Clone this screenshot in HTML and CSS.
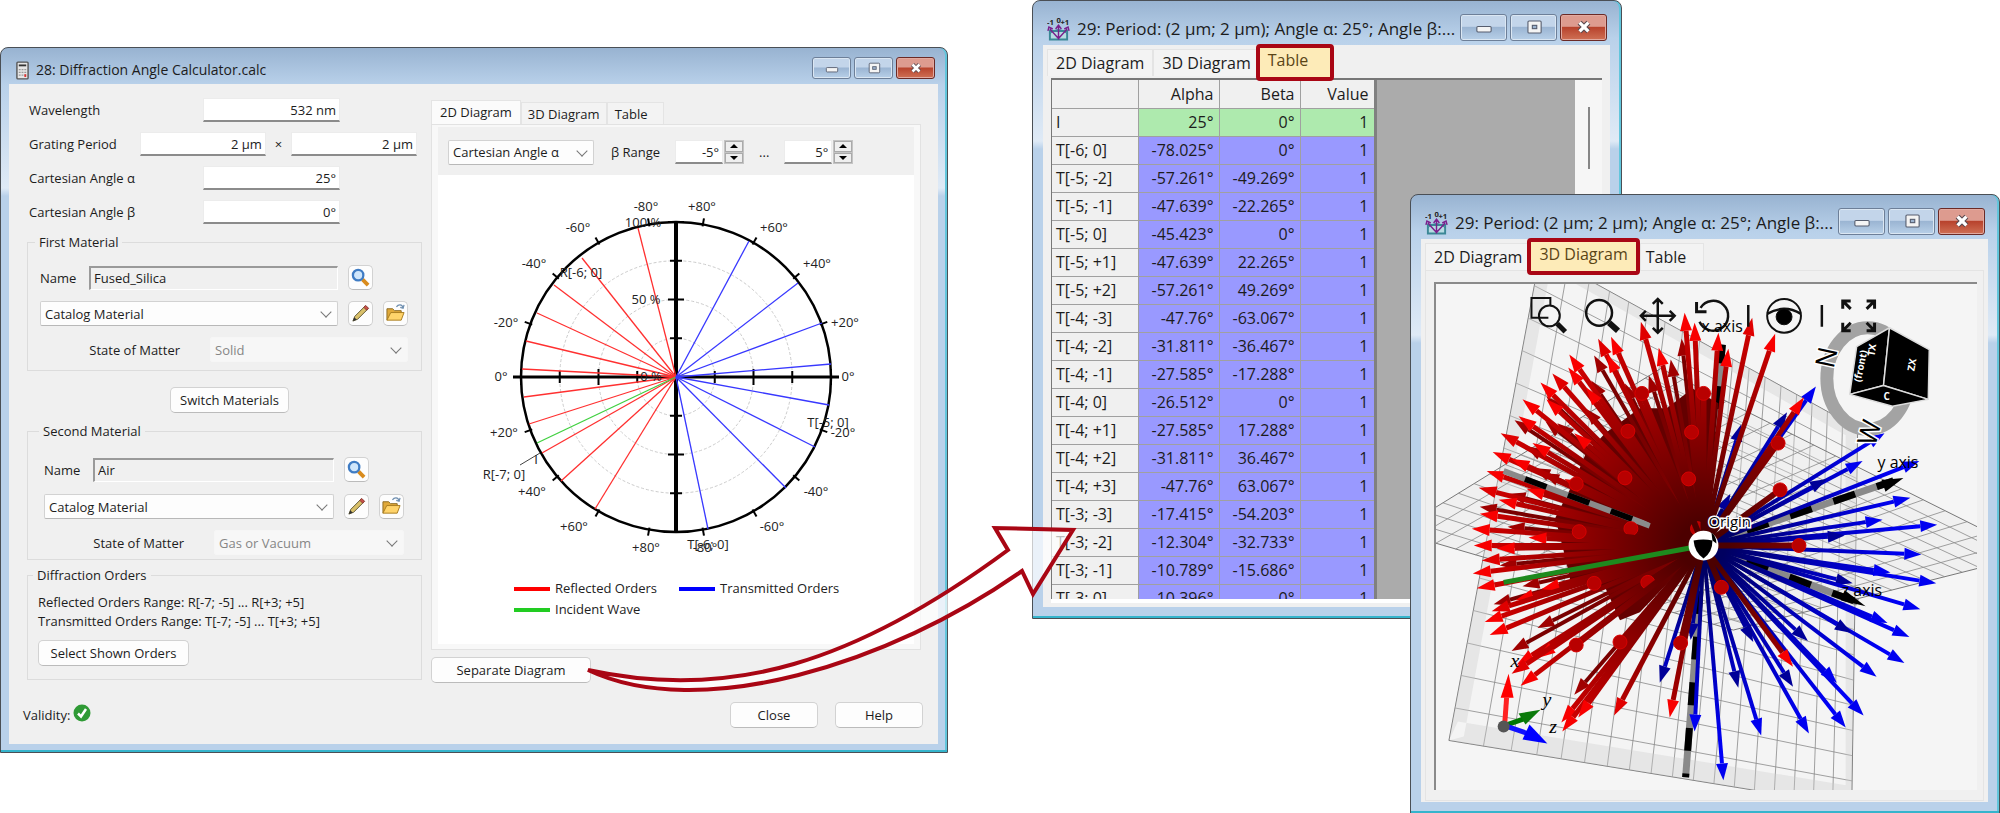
FILE: index.html
```html
<!DOCTYPE html>
<html lang="en">
<head>
    <meta charset="UTF-8">
    <title>Diffraction Angle Calculator</title>
    <link rel="stylesheet" href="styles.css">
</head>
<body>
    <svg class="symbols" width="0" height="0">
        <symbol id="i-lens" viewBox="0 0 20 20">
            <path d="M12 12l6 6" stroke="#d98b1c" stroke-width="4"/>
            <circle cx="7.5" cy="7.5" r="5.5" fill="#cfe6fb" stroke="#3f7cc4" stroke-width="2.4"/>
        </symbol>
        <symbol id="i-pencil" viewBox="0 0 20 20">
            <path d="M2 18l2-5L15 2l3 3L7 16z" fill="#d9c06a" stroke="#5c5433"/>
            <path d="M13.500 3.500L15.500 1.500l3 3-2 2z" fill="#c9504a" stroke="#8a3a34"/>
            <path d="M2 18l1.500-4 2.500 2.500z" fill="#333"/>
        </symbol>
        <symbol id="i-folder" viewBox="0 0 20 20">
            <path d="M1 17V5h6l2 2h7v3" fill="#e0a93a" stroke="#8c6a22"/>
            <path d="M1 17l4-8h14l-3 8z" fill="#ffd46b" stroke="#a87b1f"/>
            <path d="M11 3c2-3 6-3 7 1m1-3l-1 3.500-3-1" fill="none" stroke="#6f8fb0" stroke-width="1.300"/>
        </symbol>
        <symbol id="i-orders" viewBox="0 0 24 24">
            <path d="M3 14h18v9H3z" fill="#b7dbe2" stroke="#3b8796" stroke-width="2"/>
            <path d="M3 17q9-9 18 0" fill="none" stroke="#3b8796"/>
            <path d="M12 23V9M12 22L3 12M12 22l9-10M1 14l1-4 4 2M23 14l-1-4-4 2M9 12l3-4 3 4" fill="none" stroke="#7a1f8c" stroke-width="1.500"/>
            <g font-family="Open Sans, sans-serif" font-size="8" font-weight="bold" fill="#222">
                <text x="0" y="8">-1</text><text x="10" y="6">0</text><text x="14" y="8">+1</text>
            </g>
        </symbol>
        <symbol id="i-min" viewBox="0 0 20 16">
            <rect x="3.500" y="7.500" width="13" height="5" rx="1" fill="#f4f4f4" stroke="#565d6e"/>
        </symbol>
        <symbol id="i-max" viewBox="0 0 20 16">
            <rect x="4.500" y="2.500" width="12" height="11" rx="1" fill="#f4f4f4" stroke="#565d6e"/>
            <rect x="8.500" y="6.500" width="4" height="3" fill="#9db4cf" stroke="#565d6e"/>
        </symbol>
        <symbol id="i-close" viewBox="0 0 20 16">
            <path d="M6 4l8 8M14 4l-8 8" stroke="#5a4a50" stroke-width="5"/>
            <path d="M6 4l8 8M14 4l-8 8" stroke="#fff" stroke-width="3"/>
        </symbol>
    </svg>

    <main class="desktop">
        <section class="window calculator">
            <header class="titlebar">
                <svg class="title-icon" viewBox="0 0 14 20"><rect x="1" y="1" width="12" height="18" rx="1" fill="#e6e6e6" stroke="#555" stroke-width="1.500"/><path d="M3 4.500h8" stroke="#333" stroke-width="2"/><path d="M3 9h8M3 12h8M3 15h8" stroke="#999" stroke-width="1.500" stroke-dasharray="2 1"/><path d="M9 14h2v3H9z" fill="#d33"/></svg>
                <h1>28: Diffraction Angle Calculator.calc</h1>
                <div class="caption-buttons">
                    <button aria-label="Minimize"><svg><use href="#i-min"/></svg></button>
                    <button aria-label="Maximize"><svg><use href="#i-max"/></svg></button>
                    <button class="close" aria-label="Close window"><svg><use href="#i-close"/></svg></button>
                </div>
            </header>
            <div class="client">
                <div class="columns">
                    <form class="settings">
                        <div class="row"><label for="wavelength">Wavelength</label><input id="wavelength" value="532 nm"></div>
                        <div class="row row-period">
                            <label for="periodX">Grating Period</label><input id="periodX" value="2 µm"><span>×</span><input aria-label="Grating Period y" value="2 µm">
                        </div>
                        <div class="row"><label for="alpha">Cartesian Angle α</label><input id="alpha" value="25°"></div>
                        <div class="row"><label for="beta">Cartesian Angle β</label><input id="beta" value="0°"></div>

                        <fieldset class="first">
                            <legend>First Material</legend>
                            <div class="material">
                                <label for="name1">Name</label><input id="name1" class="readonly" value="Fused_Silica" readonly>
                                <button type="button" class="icon-button" aria-label="View"><svg><use href="#i-lens"/></svg></button>
                                <div class="drop catalog"><select aria-label="First material source"><option>Catalog Material</option></select></div>
                                <button type="button" class="icon-button" aria-label="Edit"><svg><use href="#i-pencil"/></svg></button>
                                <button type="button" class="icon-button" aria-label="Open"><svg><use href="#i-folder"/></svg></button>
                            </div>
                            <div class="state">
                                <label for="state1">State of Matter</label>
                                <div class="drop"><select id="state1" disabled><option>Solid</option></select></div>
                            </div>
                        </fieldset>

                        <button type="button" class="switch">Switch Materials</button>

                        <fieldset class="second">
                            <legend>Second Material</legend>
                            <div class="material">
                                <label for="name2">Name</label><input id="name2" class="readonly" value="Air" readonly>
                                <button type="button" class="icon-button" aria-label="View"><svg><use href="#i-lens"/></svg></button>
                                <div class="drop catalog"><select aria-label="Second material source"><option>Catalog Material</option></select></div>
                                <button type="button" class="icon-button" aria-label="Edit"><svg><use href="#i-pencil"/></svg></button>
                                <button type="button" class="icon-button" aria-label="Open"><svg><use href="#i-folder"/></svg></button>
                            </div>
                            <div class="state">
                                <label for="state2">State of Matter</label>
                                <div class="drop"><select id="state2" disabled><option>Gas or Vacuum</option></select></div>
                            </div>
                        </fieldset>

                        <fieldset class="orders">
                            <legend>Diffraction Orders</legend>
                            <p>Reflected Orders Range: R[-7; -5] ... R[+3; +5]</p>
                            <p>Transmitted Orders Range: T[-7; -5] ... T[+3; +5]</p>
                            <button type="button">Select Shown Orders</button>
                        </fieldset>
                    </form>

                    <div class="results">
                        <nav class="tabs">
                            <button class="tab active">2D Diagram</button>
                            <button class="tab">3D Diagram</button>
                            <button class="tab">Table</button>
                        </nav>
                        <div class="panel">
                            <div class="range-bar">
                                <div class="drop"><select aria-label="Angle type"><option>Cartesian Angle α</option></select></div>
                                <label for="betaFrom">β Range</label>
                                <div class="spin"><input id="betaFrom" value="-5°"><div><button aria-label="Up"></button><button class="down" aria-label="Down"></button></div></div>
                                <span class="dots">...</span>
                                <div class="spin"><input aria-label="β Range to" value="5°"><div><button aria-label="Up"></button><button class="down" aria-label="Down"></button></div></div>
                            </div>
                            <svg class="polar" id="polar" viewBox="0 0 476 469"></svg>
                        </div>
                        <button class="separate">Separate Diagram</button>
                    </div>
                </div>
                <footer>
                    <span>Validity:</span>
                    <svg class="check" viewBox="0 0 18 18"><circle cx="9" cy="9" r="8.500" fill="#2f9a35"/><path d="M5 9.500l3 3L13 5" fill="none" stroke="#fff" stroke-width="2.500"/></svg>
                    <button>Close</button>
                    <button>Help</button>
                </footer>
            </div>
        </section>

        <section class="window large table-window">
            <header class="titlebar">
                <svg class="title-icon"><use href="#i-orders"/></svg>
                <h1>29: Period: (2 µm; 2 µm); Angle α: 25°; Angle β:...</h1>
                <div class="caption-buttons">
                    <button aria-label="Minimize"><svg><use href="#i-min"/></svg></button>
                    <button aria-label="Maximize"><svg><use href="#i-max"/></svg></button>
                    <button class="close" aria-label="Close window"><svg><use href="#i-close"/></svg></button>
                </div>
            </header>
            <div class="client">
                <nav class="tabs">
                    <button class="tab">2D Diagram</button>
                    <button class="tab">3D Diagram</button>
                    <button class="tab marked">Table</button>
                </nav>
                <div class="sheet">
                    <div class="sheet-area">
                        <table>
                            <thead><tr><th></th><th>Alpha</th><th>Beta</th><th>Value</th></tr></thead>
                            <tbody id="orders"></tbody>
                        </table>
                    </div>
                    <div class="scrollbar"><i></i></div>
                </div>
            </div>
        </section>

        <section class="window large space-window">
            <header class="titlebar">
                <svg class="title-icon"><use href="#i-orders"/></svg>
                <h1>29: Period: (2 µm; 2 µm); Angle α: 25°; Angle β:...</h1>
                <div class="caption-buttons">
                    <button aria-label="Minimize"><svg><use href="#i-min"/></svg></button>
                    <button aria-label="Maximize"><svg><use href="#i-max"/></svg></button>
                    <button class="close" aria-label="Close window"><svg><use href="#i-close"/></svg></button>
                </div>
            </header>
            <div class="client">
                <nav class="tabs">
                    <button class="tab">2D Diagram</button>
                    <button class="tab marked">3D Diagram</button>
                    <button class="tab">Table</button>
                </nav>
                <div class="scene-panel">
                    <svg class="scene" viewBox="0 0 544 509">
                        <defs>
                            <radialGradient id="redRay" gradientUnits="userSpaceOnUse" cx="269" cy="263" r="235"><stop offset=".1" stop-color="#4c0000"/><stop offset=".5" stop-color="#8c0000"/><stop offset="1" stop-color="#d80000"/></radialGradient>
                            <radialGradient id="blueRay" gradientUnits="userSpaceOnUse" cx="269" cy="263" r="220"><stop offset=".1" stop-color="#000060"/><stop offset=".5" stop-color="#0000b4"/><stop offset="1" stop-color="#0000ff"/></radialGradient>
                        </defs>
                        <g id="planes"></g>
                        <g id="rays"></g>
                        <g class="tools">
                            <path d="M113 34H96V14h19v8" stroke-width="2"/>
                            <circle cx="114" cy="32" r="10.500" stroke-width="2"/><path d="M122 40l8 8" stroke-width="5"/>
                            <circle cx="164" cy="29" r="13" stroke-width="2.500"/><path d="M174 39l9 8" stroke-width="6"/>
                            <path d="M223 15v34M206 32h34M218 20l5-5 5 5M218 44l5 5 5-5M211 27l-5 5 5 5M235 27l5 5-5 5" stroke-width="2.500"/>
                            <path d="M266 24a15 15 0 1 1-1 14" stroke-width="2.500"/><path d="M262 18v10h10" stroke-width="3"/>
                            <path d="M314 21v22M388 21v22" stroke-width="2.500"/>
                            <circle cx="350" cy="32" r="17" stroke-width="2"/><path d="M333 30q17-10 34 0" stroke-width="2.500"/><circle cx="350" cy="33" r="8" fill="#000"/>
                        </g>
                        <ellipse cx="434" cy="95" rx="41" ry="51" fill="none" stroke="#a3a3a3" stroke-width="13"/>
                        <path class="expand" d="M409 25v-8h8M410 18l7 7M441 25v-8h-8M440 18l-7 7M409 39v8h8M410 46l7-7M441 39v8h-8M440 46l-7-7"/>
                        <g stroke="#ddd" stroke-width="1.500" stroke-linejoin="round">
                            <path d="M456 44L423 63L416 111L450 102z"/><path d="M456 44L496 66L495 116L450 102z"/><path d="M416 111L450 102L495 116L459 123z"/>
                        </g>
                        <g class="compass">
                            <text transform="translate(384 68) rotate(102)" dominant-baseline="middle" text-anchor="middle" x="4" y="-7">N</text>
                            <text transform="translate(438 150) rotate(-75)" dominant-baseline="middle" text-anchor="middle">W</text>
                        </g>
                        <g class="cube-text">
                            <text transform="translate(427 99) rotate(-78)">(front)</text>
                            <text transform="translate(441 73) rotate(-82)">TX</text>
                            <text transform="translate(481 88) rotate(-80)">ZX</text>
                            <text x="450" y="117">C</text>
                        </g>
                        <g class="scene-labels">
                            <text x="267" y="48">x axis</text><text x="444" y="185">y axis</text><text x="408" y="314">z axis</text>
                            <text class="origin" x="274" y="244">Origin</text>
                        </g>
                        <circle cx="269" cy="263" r="15" fill="#fff"/>
                        <path d="M259 258q10-2 19 0q0 12-9 18q-9-6-10-18z"/><path d="M277 250q5 4 5 11l-4-3z"/>
                        <g class="triad">
                            <path d="M69 444l2-28" stroke="#f22"/><path d="M65 416l8-24 5 24z" fill="red"/>
                            <path d="M69 444l20-7" stroke="#070"/><path d="M83 432l22-4-15 15z" fill="#0a7a0a"/>
                            <path d="M69 444l23 8" stroke="#11f"/><path d="M94 443l18 19-25-4z" fill="#00f"/>
                            <circle cx="68" cy="445" r="6" fill="#555"/>
                            <text x="75" y="385">x</text><text x="107" y="424">y</text><text x="114" y="451">z</text>
                        </g>
                    </svg>
                </div>
            </div>
        </section>

        <svg class="callout" viewBox="0 0 500 176">
            <path d="M8 151C150 182 275 144 428 31L415 9L493 11L453 75L442 52C310 145 120 204 8 151z"/>
        </svg>
    </main>
    <script src="script.js"></script>
</body>
</html>
```
FILE: styles.css
```css
* {
    box-sizing: border-box;
}

body {
    margin: 0;
    background: #fff;
    color: #1c1c1c;
    font-family: "Open Sans", "Noto Sans", sans-serif;
    font-size: 13px;
    line-height: 18px;
}

button, input, select {
    font: inherit;
    color: inherit;
}

.symbols {
    position: absolute;
}

.desktop {
    position: relative;
    min-height: 100vh;
    overflow: hidden;
}

/* windows */
.window {
    position: absolute;
    padding: 0 9px 8px 8px;
    border: 1px solid #4a4f55;
    border-radius: 8px 8px 0 0;
    background: linear-gradient(#98b3d1, #b9d1ea 37px, #dfeaf6 140px, #b9d1ea 148px);
    box-shadow: inset 0 -2px 0 #35b4cc, inset -2px 0 0 #62c6dc;
}

.calculator {
    left: 0;
    top: 47px;
    width: 47.4%;
}

.table-window {
    left: 51.6%;
    top: 0;
    width: 29.5%;
}

.space-window {
    left: 70.5%;
    top: 194px;
    width: 29.5%;
}

.titlebar {
    display: flex;
    align-items: center;
    height: 36px;
    padding: 8px 0 0 7px;
}

.titlebar h1 {
    flex: 1;
    margin: 0 0 0 7px;
    font-size: 14px;
    font-weight: 400;
    white-space: nowrap;
}

.title-icon {
    width: 13px;
    height: 19px;
}

.caption-buttons {
    display: flex;
    gap: 3px;
    padding: 0 3px 4px 0;
}

.caption-buttons button {
    display: flex;
    align-items: center;
    justify-content: center;
    width: 39px;
    height: 22px;
    padding: 0;
    border: 1px solid #6d7f98;
    border-radius: 3px;
    background: linear-gradient(#c3d5ea 45%, #9bb5d3 50%, #b8d0e8);
    box-shadow: inset 0 0 0 1px #dbe7f3;
}

.caption-buttons .close {
    border-color: #6b2a26;
    background: linear-gradient(#dd9b8f 45%, #b8432d 50%, #cf7055);
    box-shadow: inset 0 0 0 1px #e2aaa0;
}

.caption-buttons svg {
    width: 18px;
    height: 14px;
}

.client {
    background: #f0f0f0;
}

.calculator .client {
    padding: 14px 15px 16px 18px;
}

.columns {
    display: grid;
    grid-template-columns: 395px 1fr;
    gap: 9px;
}

/* fields */
input {
    min-width: 0;
    height: 24px;
    padding: 0 3px;
    border: 1px solid #ececec;
    border-bottom: 2px solid #8b8b8b;
    background: #fff;
    text-align: right;
}

.row {
    display: flex;
    align-items: center;
    justify-content: space-between;
    margin-bottom: 10px;
    padding: 0 82px 0 2px;
}

.row input {
    width: 137px;
}

.row-period {
    padding-right: 5px;
}

.row-period input {
    width: 126px;
}

.row-period label {
    width: 102px;
}

fieldset {
    min-width: 0;
    margin: 0;
    padding: 0 13px 8px 12px;
    border: 1px solid #dcdcdc;
}

legend {
    margin-left: -5px;
    padding: 0 4px;
}

.first {
    margin-top: -1px;
    padding-top: 14px;
}

.second {
    padding: 17px 17px 4px 16px;
}

.orders {
    margin-top: 6px;
    padding: 9px 10px 13px 10px;
}

.material {
    display: grid;
    grid-template-columns: 39px 1fr 25px 25px;
    gap: 11px 10px;
    align-items: center;
    margin-bottom: 11px;
}

.second .material {
    row-gap: 12px;
}

.material .icon-button:nth-of-type(1) {
    grid-column: 3 / 5;
}

.catalog {
    grid-column: 1 / 3;
}

.readonly {
    border: 1px solid #fff;
    border-top: 2px solid #9a9a9a;
    border-left: 2px solid #9a9a9a;
    background: #f0f0f0;
    text-align: left;
}

.state {
    display: flex;
    align-items: center;
    justify-content: flex-end;
    gap: 30px;
}

.state .drop {
    width: 198px;
}

.second .state .drop {
    width: 190px;
}

.drop {
    position: relative;
}

.drop::after {
    content: "";
    position: absolute;
    right: 8px;
    top: 7px;
    width: 7px;
    height: 7px;
    border: solid #777;
    border-width: 0 1px 1px 0;
    transform: rotate(45deg);
    pointer-events: none;
}

select {
    display: block;
    appearance: none;
    width: 100%;
    height: 25px;
    padding: 0 4px;
    border: 1px solid #d2d2d2;
    border-bottom-color: #b8b8b8;
    border-radius: 2px;
    background: #fdfdfd;
}

select:disabled {
    border-color: #f6f6f6;
    background: #f7f7f7;
    color: #868686;
    opacity: 1;
}

.settings > button, .orders button, .separate, footer button, .icon-button {
    height: 26px;
    padding: 0;
    border: 1px solid #d2d2d2;
    border-bottom-color: #bbb;
    border-radius: 5px;
    background: #fdfdfd;
}

.icon-button {
    display: flex;
    align-items: center;
    justify-content: center;
    width: 25px;
    height: 25px;
}

.icon-button svg {
    width: 19px;
    height: 19px;
}

.settings .switch {
    display: block;
    width: 119px;
    margin: 16px 0 9px 143px;
}

.orders p {
    margin: 0;
    line-height: 19px;
}

.orders button {
    width: 151px;
    margin-top: 9px;
}

/* tabs */
.tabs {
    display: flex;
    align-items: flex-end;
}

.tab {
    height: 22px;
    padding: 0 6px;
    border: 1px solid #e4e4e4;
    border-bottom: 0;
    background: #f3f3f3;
}

.tab.active {
    height: 24px;
    padding: 0 8px 2px;
    background: #fbfbfb;
}

.results {
    padding-top: 2px;
}

.calculator .tab:last-child {
    padding: 0 15px 0 7px;
}

.panel {
    margin-right: 2px;
    padding: 2px 6px 5px;
    border: 1px solid #e2e2e2;
    background: #f8f8f8;
}

.range-bar {
    display: flex;
    align-items: center;
    height: 48px;
    padding: 2px 10px 0;
    background: #f0f0f0;
}

.range-bar > .drop {
    width: 146px;
}

.range-bar label {
    margin: 0 15px 0 17px;
}

.dots {
    margin: 0 15px;
}

.spin {
    display: flex;
    gap: 1px;
}

.spin input {
    width: 48px;
}

.spin div {
    display: flex;
    flex-direction: column;
    gap: 1px;
    width: 20px;
    padding: 1px;
    background: #c4c4c4;
}

.spin button {
    flex: 1;
    display: flex;
    align-items: center;
    justify-content: center;
    min-height: 0;
    padding: 0;
    border: 1px solid #aaa;
    background: #efefef;
}

.spin button::before {
    content: "";
    border: 4px solid transparent;
    border-top-width: 0;
    border-bottom-color: #000;
}

.spin .down::before {
    transform: rotate(180deg);
}

.polar {
    display: block;
    width: 100%;
    background: #fff;
    font-size: 13px;
    fill: #222;
}

.separate {
    width: 160px;
    margin-top: 7px;
}

footer {
    display: flex;
    align-items: center;
    gap: 17px;
    margin-top: 19px;
    margin-left: -4px;
}

footer button {
    width: 88px;
}

.check {
    width: 18px;
    height: 18px;
    margin: -4px auto 0 -14px;
}

/* separated diagram windows */
.large {
    padding: 0 11px 11px 10px;
    font-size: 16px;
}

.large .titlebar {
    height: 44px;
    padding: 12px 0 0 4px;
}

.large .titlebar h1 {
    font-size: 17px;
}

.large .title-icon {
    width: 23px;
    height: 24px;
}

.large .caption-buttons button {
    width: 47px;
    height: 27px;
}

.large .caption-buttons svg {
    width: 22px;
    height: 18px;
}

.large .tabs {
    height: 31px;
    padding-left: 4px;
}

.large .tab {
    height: 27px;
    padding: 0 8px;
    white-space: nowrap;
}

.large .tab.marked {
    z-index: 1;
    height: 37px;
    margin: 0 0 -5px -4px;
    padding: 0 8px 5px;
    border: 4px solid #a90614;
    border-radius: 4px;
    background: #fdebb8;
    color: #5a4516;
}

.table-window .tab.marked {
    padding-right: 22px;
}

.space-window .tab:last-child {
    padding: 0 17px 0 5px;
}

.table-window .client {
    padding: 0 8px 8px;
}

.table-window .tabs {
    height: 33px;
    margin: 0 -4px;
    padding: 0 0 2px;
}

.sheet {
    display: flex;
    height: 521px;
    border: solid #777;
    border-width: 2px 0 0 1px;
    box-shadow: 0 4px 0 #fff;
}

.sheet-area {
    flex: 1;
    overflow: hidden;
    background: #ababab;
}

.scrollbar {
    width: 27px;
    padding: 27px 0 0 13px;
    background: #f6f6f6;
}

.scrollbar i {
    display: block;
    width: 2px;
    height: 62px;
    background: #868686;
}

table {
    table-layout: fixed;
    width: 324px;
    border-collapse: collapse;
    border-right: 3px solid #808080;
}

th, td {
    width: 81px;
    height: 28px;
    padding: 0 5px;
    border: solid #a0a0a0;
    border-width: 0 1px 1px 0;
    font-weight: 400;
    text-align: right;
}

th {
    background: #f0f0f0;
}

th:first-child {
    width: 86px;
    padding: 0 4px;
    text-align: left;
}

th:last-child, td:last-child {
    width: 75px;
}

td {
    background: #9999ff;
}

.incident td {
    background: #aeeaae;
}

.scene-panel {
    margin: 0 4px;
    padding: 11px 6px 10px 8px;
    border: 1px solid #e4e4e4;
    background: #f0f0f0;
}

.space-window .client {
    padding-bottom: 1px;
}

.scene {
    display: block;
    width: 100%;
    border: solid #8a8a8a;
    border-width: 2px 0 0 2px;
    background: #f5f5f5;
}

.tools {
    fill: none;
    stroke: #111;
}

.expand {
    fill: none;
    stroke: #111;
    stroke-width: 3px;
}

.scene-labels {
    font-size: 16px;
}

.origin {
    font-size: 15px;
    stroke: #fff;
    stroke-width: 3px;
    paint-order: stroke;
}

.compass {
    font-size: 27px;
    stroke: #fff;
    stroke-width: 3px;
    paint-order: stroke;
}

.cube-text {
    fill: #fff;
    font-size: 10px;
    font-weight: bold;
}

.triad {
    stroke-width: 5px;
}

.triad text {
    font-family: "Liberation Serif", serif;
    font-size: 20px;
    font-style: italic;
}

.callout {
    position: absolute;
    left: 29%;
    top: 519px;
    width: 25%;
    pointer-events: none;
}

.callout path {
    fill: rgba(255, 255, 255, 0.7);
    stroke: #a90614;
    stroke-width: 4px;
}
```
FILE: script.js
```js
const tableRows = [
    ['I', '25°', '0°'],
    ['T[-6; 0]', '-78.025°', '0°'],
    ['T[-5; -2]', '-57.261°', '-49.269°'],
    ['T[-5; -1]', '-47.639°', '-22.265°'],
    ['T[-5; 0]', '-45.423°', '0°'],
    ['T[-5; +1]', '-47.639°', '22.265°'],
    ['T[-5; +2]', '-57.261°', '49.269°'],
    ['T[-4; -3]', '-47.76°', '-63.067°'],
    ['T[-4; -2]', '-31.811°', '-36.467°'],
    ['T[-4; -1]', '-27.585°', '-17.288°'],
    ['T[-4; 0]', '-26.512°', '0°'],
    ['T[-4; +1]', '-27.585°', '17.288°'],
    ['T[-4; +2]', '-31.811°', '36.467°'],
    ['T[-4; +3]', '-47.76°', '63.067°'],
    ['T[-3; -3]', '-17.415°', '-54.203°'],
    ['T[-3; -2]', '-12.304°', '-32.733°'],
    ['T[-3; -1]', '-10.789°', '-15.686°'],
    ['T[-3; 0]', '-10.396°', '0°']
];

document.getElementById('orders').innerHTML = tableRows.map((r, i) =>
    `<tr${i === 0 ? ' class="incident"' : ''}><th>${r[0]}</th><td>${r[1]}</td><td>${r[2]}</td><td>1</td></tr>`
).join('');

function line(x1, y1, x2, y2, color, width, extra = '') {
    return `<line x1="${x1}" y1="${y1}" x2="${x2}" y2="${y2}" stroke="${color}" stroke-width="${width}" ${extra}/>`;
}

// 2D polar diagram
function drawPolar() {
    const cx = 238, cy = 202, r = 155;
    const reflected = [[200,53],[144,83],[116,110],[99,138],[88,166],[84,194],[86,222],[91,249],[104,278],[123,306],[157,334]];
    const transmitted = [[311,66],[360,108],[384,148],[393,189],[391,230],[377,272],[348,313],[270,354]];
    const labels = [
        [208,31,'-80°'],[264,31,'+80°'],[140,52,'-60°'],[336,52,'+60°'],[96,88,'-40°'],[379,88,'+40°'],
        [68,147,'-20°'],[407,147,'+20°'],[63,201,'0°'],[410,201,'0°'],[66,257,'+20°'],[405,257,'-20°'],
        [94,316,'+40°'],[378,316,'-40°'],[136,351,'+60°'],[334,351,'-60°'],[208,372,'+80°'],[267,372,'-80°'],
        [143,97,'R[-6; 0]'],[66,299,'R[-7; 0]'],[390,247,'T[-5; 0]'],[270,369,'T[-6; 0]'],[98,284,'I'],
        [205,47,'100 %'],[208,124,'50 %'],[213,201,'0 %']
    ];
    let out = '';
    [0.25, 0.5, 0.75].forEach(k => {
        out += `<circle cx="${cx}" cy="${cy}" r="${r * k}" fill="none" stroke="#ccc" stroke-dasharray="3 2"/>`;
    });
    out += `<circle cx="${cx}" cy="${cy}" r="${r}" fill="none" stroke="#000" stroke-width="2.5"/>`;
    out += line(cx - r - 8, cy, cx + r + 8, cy, '#000', 3) + line(cx, cy - r, cx, cy + r, '#000', 4);
    [-1, -0.75, -0.5, -0.25, 0.25, 0.5, 0.75, 1].forEach(k => {
        const h = Math.abs(k) === 0.5 || Math.abs(k) === 1 ? 8 : 6;
        out += line(cx + r * k, cy - h, cx + r * k, cy + h, '#000', 2);
        out += line(cx - h, cy + r * k, cx + h, cy + r * k, '#000', 2);
    });
    for (let a = -80; a <= 80; a += 20) {
        const c = Math.cos(a * Math.PI / 180), s = Math.sin(a * Math.PI / 180);
        [1, -1].forEach(d => {
            out += line(cx + d * c * (r - 2), cy + s * (r - 2), cx + d * c * (r + 6), cy + s * (r + 6), '#000', 2);
        });
    }
    out += line(82, 290, 102, 278, '#444', 1);
    reflected.forEach(p => out += line(cx, cy, p[0], p[1], '#ff3030', 1.3));
    out += line(cx, cy, 99, 268, '#40d040', 1.3);
    transmitted.forEach(p => out += line(cx, cy, p[0], p[1], '#3838ff', 1.3));
    labels.forEach(l => out += `<text x="${l[0]}" y="${l[1] + 5}" text-anchor="middle">${l[2]}</text>`);
    [[76, 414, '#ff0000', 'Reflected Orders'], [241, 414, '#0000ff', 'Transmitted Orders'], [76, 435, '#22cc22', 'Incident Wave']].forEach(g => {
        out += line(g[0], g[1], g[0] + 36, g[1], g[2], 4);
        out += `<text x="${g[0] + 41}" y="${g[1] + 4}">${g[3]}</text>`;
    });
    document.getElementById('polar').innerHTML = out;
}

// mesh of a plane given by its four corners, cells get smaller towards the second pair
function mesh(a, b, c, d, n, m, power) {
    const mix = (p, q, t) => [p[0] + (q[0] - p[0]) * t, p[1] + (q[1] - p[1]) * t];
    let out = `<path d="M${a}L${b}L${c}L${d}z" fill="#f4f4f4" stroke="#777"/>`;
    for (let i = 1; i < n; i++) {
        const t = Math.pow(i / n, power);
        out += `<path d="M${mix(a, b, t)}L${mix(d, c, t)}" stroke="#888" stroke-width=".8"/>`;
    }
    for (let i = 1; i < m; i++) {
        out += `<path d="M${mix(a, d, i / m)}L${mix(b, c, i / m)}" stroke="#888" stroke-width=".8"/>`;
    }
    return out;
}

function arrow(x, y, stroke, head, width) {
    const ox = 269, oy = 263;
    const len = Math.hypot(x - ox, y - oy);
    const ux = (x - ox) / len, uy = (y - oy) / len;
    const h = width + 13, w = 6;
    const bx = x - ux * h, by = y - uy * h;
    return line(ox, oy, bx, by, stroke, width) +
        `<path d="M${x} ${y}L${bx - uy * w} ${by + ux * w}L${bx + uy * w} ${by - ux * w}z" fill="${head}"/>`;
}

function drawScene() {
    const redDark = [[247,55],[236,76],[159,72],[156,97],[111,113],[79,137],[44,224],[87,304],[58,322],[102,346],[139,413],[76,369],
        [122,140],[90,163],[98,185],[73,211],[64,283],[110,138],[214,92],[190,100],[150,125],[107,190],[72,244]];
    const red = [[206,38],[250,29],[260,39],[224,64],[176,53],[163,55],[172,71],[134,71],[133,84],[151,104],[117,90],[105,99],
        [111,116],[87,116],[83,133],[65,150],[57,169],[76,176],[97,160],[51,188],[43,205],[44,231],[36,246],[63,217],[91,206],[129,196],
        [139,150],[93,255],[284,49],[294,65],[318,34],[341,50],[370,114],[38,263],[61,266],[46,278],[37,291],[41,306],[80,318],[106,307],
        [56,329],[49,340],[54,353],[81,383],[102,376],[76,392],[85,404],[126,441],[127,450],[143,436],[179,434],[235,436],[359,385]];
    const knobs = [[193,148],[257,149],[190,195],[254,196],[196,246],[144,249],[263,246],[207,110],[269,110],[213,300],[246,361],
        [365,263],[287,305],[185,360],[141,363],[159,301],[141,201],[344,160],[346,207]];
    const blue = [[382,103],[353,129],[307,141],[296,211],[451,150],[429,178],[393,196],[486,178],[477,215],[449,237],[504,242],
        [411,253],[488,272],[503,301],[457,290],[419,301],[487,327],[476,355],[454,341],[471,381],[418,351],[443,395],[374,359],
        [430,434],[403,401],[412,446],[375,452],[359,405],[319,360],[327,454],[304,406],[289,499],[260,450],[225,401],[256,358]];

    let planes = mesh([13,459], [418,525], [424,145], [105,-31], 18, 15, 0.85);
    planes += `<path d="M13 459L418 525V505L22 440zM13 459L105 -31H118L28 455zM424 145L105 -31V-20L412 152V510H418z" fill="#ccc" fill-opacity=".35"/>`;
    planes += mesh([-40,249], [226,85], [600,272], [299,348], 17, 17, 1).replace('fill="#f4f4f4"', 'fill="#e8e8e8" fill-opacity=".35"');
    document.getElementById('planes').innerHTML = planes;

    let out = '';
    [[251,496],[460,198],[424,320],[288,61]].forEach(p => {
        out += line(269, 263, p[0], p[1], '#8a8a8a', 7);
        out += line(269, 263, p[0], p[1], '#000', 7, 'stroke-dasharray="23 23"');
    });
    out += '<path d="M470 195L448 197L452 209zM432 324L411 308L407 318z"/>';
    blue.forEach(p => out += arrow(p[0], p[1], 'url(#blueRay)', Math.hypot(p[0] - 269, p[1] - 263) > 175 ? '#0000f0' : '#000098', 4));
    // dense bundle between the reflected orders
    out += '<path d="M269 263L284 120L258 105L232 125L205 125L170 150L150 172L140 196L120 235L130 275L135 298L170 305L185 338L205 330z" fill="#640000"/>';
    redDark.forEach(p => out += arrow(p[0], p[1], '#7a0000', '#a00000', 4));
    red.forEach((p, i) => out += arrow(p[0], p[1], 'url(#redRay)', i % 5 ? '#f80000' : '#e00000', 5));
    out += line(68, 188, 215, 243, '#8a8a8a', 6);
    out += line(68, 188, 215, 243, '#000', 6, 'stroke-dasharray="23 23" stroke-dashoffset="23"');
    knobs.forEach(p => {
        out += line(269, 263, p[0], p[1], 'url(#redRay)', 6);
        out += `<circle cx="${p[0]}" cy="${p[1]}" r="7" fill="#b80000" stroke="#d80000"/>`;
    });
    out += line(258, 265, 68, 300, '#1e8a1e', 5);
    document.getElementById('rays').innerHTML = out;
}

drawPolar();
drawScene();
```
